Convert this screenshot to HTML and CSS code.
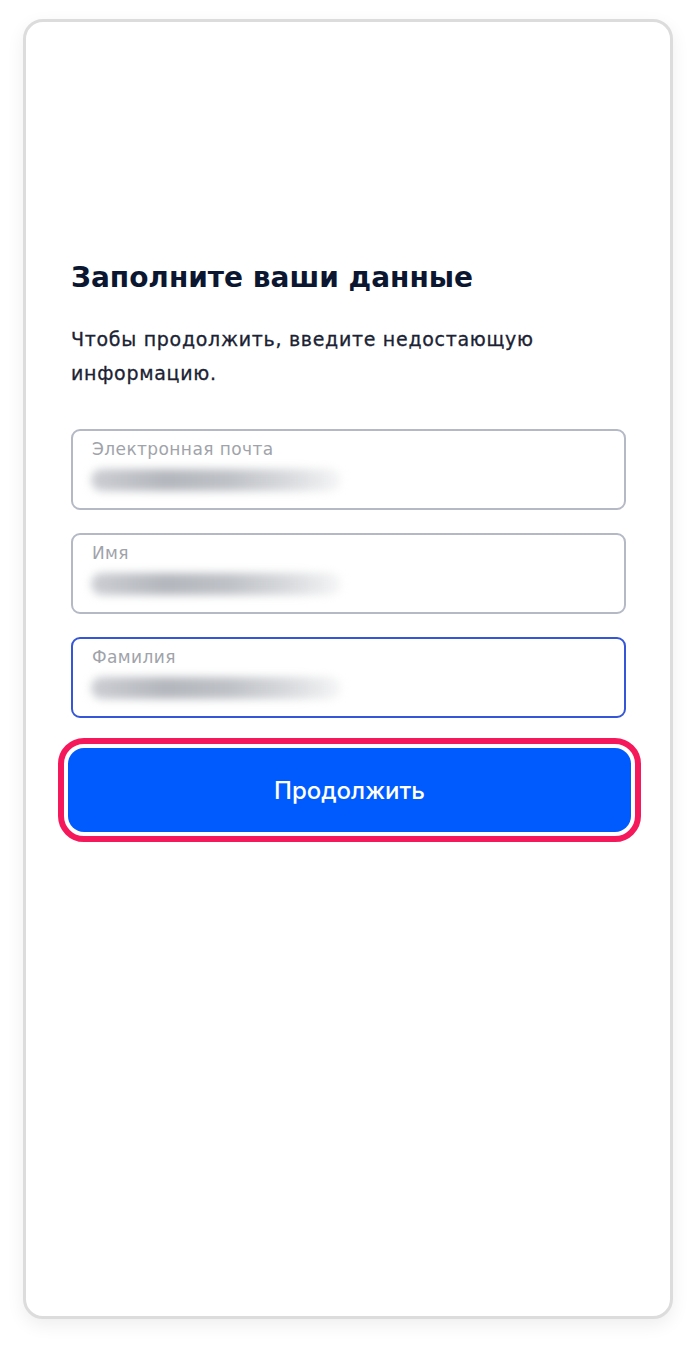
FILE: index.html
```html
<!DOCTYPE html>
<html lang="ru">
<head>
<meta charset="utf-8">
<title>Заполните ваши данные</title>
<link rel="stylesheet" href="styles.css">
</head>
<body>
<div class="card">
  <div class="content">
    <h1 class="title">Заполните ваши данные</h1>
    <p class="subtitle">Чтобы продолжить, введите недостающую информацию.</p>
    <div class="fields">
      <div class="field">
        <span class="label">Электронная почта</span>
        <span class="value-blur"></span>
      </div>
      <div class="field">
        <span class="label">Имя</span>
        <span class="value-blur"></span>
      </div>
      <div class="field field-active">
        <span class="label">Фамилия</span>
        <span class="value-blur"></span>
      </div>
    </div>
    <button class="btn" type="button">Продолжить</button>
  </div>
</div>
</body>
</html>
```

FILE: styles.css
```css
html, body {
  margin: 0;
  padding: 0;
  background: #ffffff;
}

body {
  padding: 19px 24px 29px 23px;
  font-family: "DejaVu Sans", "Noto Sans", sans-serif;
}

.card {
  box-sizing: border-box;
  width: 650px;
  height: 1300px;
  border: 3px solid #dcdcdc;
  border-radius: 20px;
  background: #ffffff;
  box-shadow: 0 6px 18px rgba(0, 0, 0, 0.07);
}

.content {
  display: flex;
  flex-direction: column;
  padding: 239px 44px 0 45px;
}

.title {
  margin: 0;
  font-family: "DejaVu Sans", sans-serif;
  font-size: 28px;
  line-height: 34px;
  font-weight: 700;
  color: #0b1730;
}

.subtitle {
  margin: 27px 0 0;
  font-family: "DejaVu Sans", sans-serif;
  font-size: 19px;
  line-height: 34px;
  font-weight: 400;
  color: #1a2233;
  letter-spacing: 0.7px;
  max-width: 520px;
  -webkit-text-stroke: 0.3px #1a2233;
}

.fields {
  display: flex;
  flex-direction: column;
  gap: 23px;
  margin-top: 39px;
}

.field {
  box-sizing: border-box;
  height: 81px;
  border: 2.5px solid #b5b9c5;
  border-radius: 9px;
  padding: 7px 18px 0 18px;
  display: flex;
  flex-direction: column;
  gap: 9px;
}

.field-active {
  border-color: #3556d6;
}

.label {
  font-family: "DejaVu Sans", sans-serif;
  font-size: 17px;
  line-height: 22px;
  color: #a0a3aa;
  letter-spacing: 0.4px;
  padding-left: 1px;
}

.value-blur {
  display: block;
  width: 250px;
  height: 22px;
  border-radius: 11px;
  background: linear-gradient(90deg, #ccced3 0%, #b3b6bc 30%, #bec1c6 55%, #d9dbde 80%, rgba(232, 233, 236, 0.4) 100%);
  filter: blur(4px);
}

.btn {
  margin: 30px -5px 0 -3px;
  height: 84px;
  border: 0;
  border-radius: 16px;
  background: #005bff;
  color: #ffffff;
  font-family: "Inter", "Roboto", sans-serif;
  font-size: 24px;
  font-weight: 500;
  outline: 6px solid #f5185a;
  outline-offset: 4px;
  cursor: pointer;
}
```
